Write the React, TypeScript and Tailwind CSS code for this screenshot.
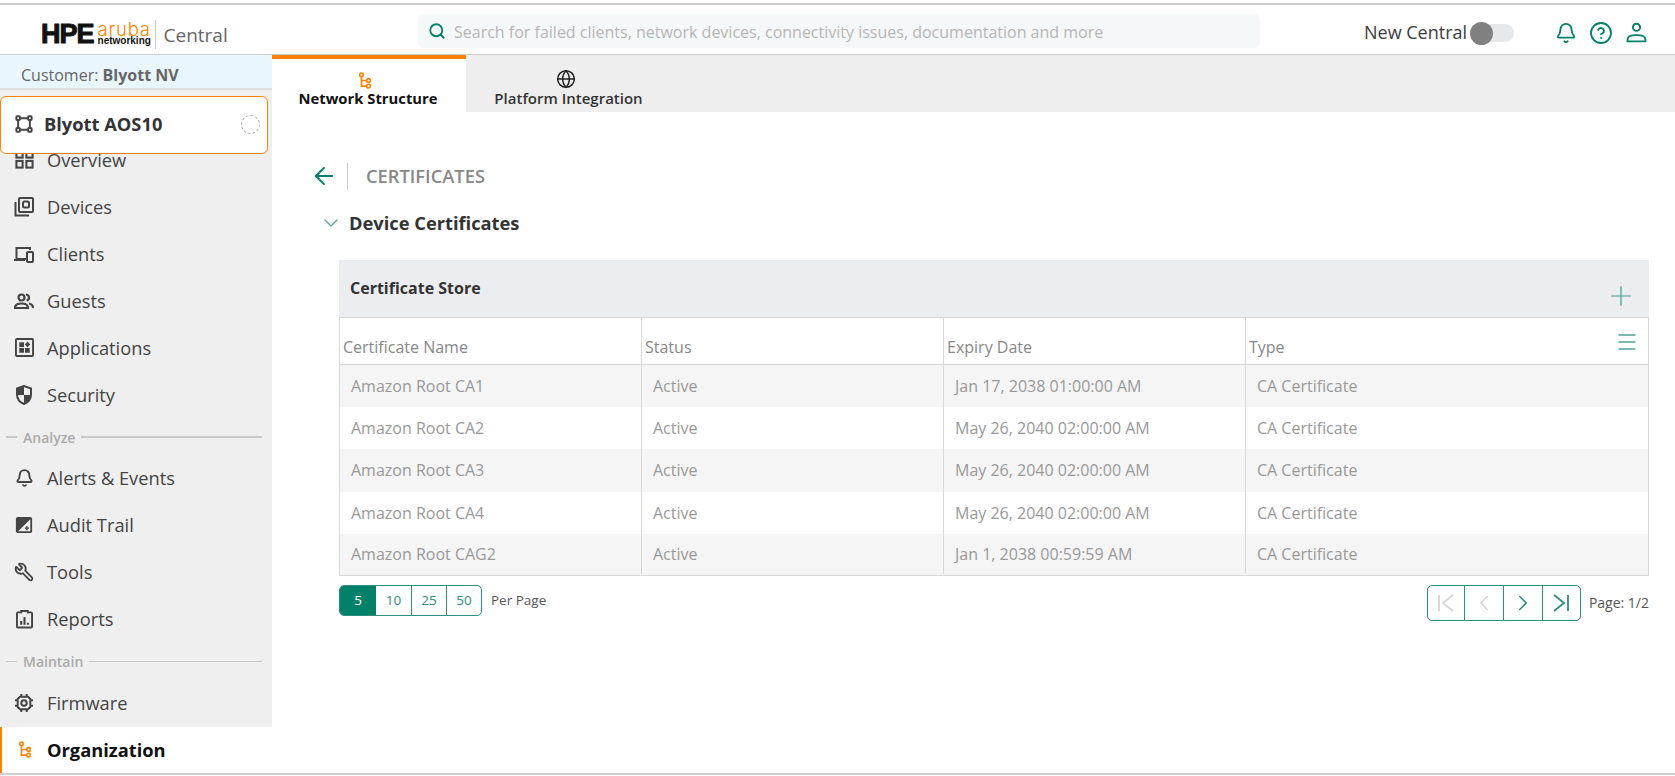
import React from "react";
import { Bell, ArrowLeft, ChevronDown, Plus, Menu, Search, CircleHelp, Globe, Wrench, ChevronLeft, ChevronRight } from "lucide-react";

type IconProps = { className?: string };

const Tree = ({ className }: IconProps) => (
  <svg viewBox="1 0 17 24" fill="none" stroke="currentColor" strokeWidth="2.300" className={className}>
    <circle cx="4.500" cy="4" r="2.600" />
    <circle cx="14.500" cy="12" r="2.600" />
    <circle cx="14.500" cy="20" r="2.600" />
    <path d="M4.500 6.600V20H12M4.500 12H12" />
  </svg>
);
const Nodes = ({ className }: IconProps) => (
  <svg viewBox="0 0 20 20" fill="none" stroke="currentColor" strokeWidth="2.200" className={className}>
    <rect x="1.500" y="1.500" width="4" height="4" rx="1" />
    <rect x="14.500" y="1.500" width="4" height="4" rx="1" />
    <rect x="1.500" y="14.500" width="4" height="4" rx="1" />
    <rect x="14.500" y="14.500" width="4" height="4" rx="1" />
    <path d="M5.500 3.500h9M5.500 16.500h9M3.500 5.500v9M16.500 5.500v9" />
  </svg>
);
const Overview = ({ className }: IconProps) => (
  <svg viewBox="0 0 20 20" fill="none" stroke="currentColor" strokeWidth="2.200" className={className}>
    <rect x="1.500" y="1" width="6.500" height="7" />
    <rect x="12" y="1" width="6.500" height="7" />
    <rect x="1.500" y="11.500" width="6.500" height="7" />
    <rect x="12" y="11.500" width="6.500" height="7" />
  </svg>
);
const Devices = ({ className }: IconProps) => (
  <svg viewBox="0 0 20 20" fill="none" stroke="currentColor" strokeWidth="2" className={className}>
    <rect x="5" y="1" width="14" height="14" rx="1" />
    <rect x="9" y="4.500" width="6" height="6" rx="1.500" />
    <path d="M1.500 5v13.500H15" />
  </svg>
);
const Clients = ({ className }: IconProps) => (
  <svg viewBox="0 0 20 18" fill="none" stroke="currentColor" strokeWidth="2" className={className}>
    <path d="M12 14H2.500V3H16V5" />
    <path d="M0 15h11" />
    <rect x="13" y="7" width="6" height="10" rx="1" />
  </svg>
);
const Guests = ({ className }: IconProps) => (
  <svg viewBox="0 0 20 16" fill="none" stroke="currentColor" strokeWidth="2.200" className={className}>
    <circle cx="7.500" cy="4.500" r="3" />
    <path d="M1 15c0-3 3-4.500 6.500-4.500S14 12 14 15H1Z" />
    <path d="M12 1.500c2 .2 3 1.400 3 3s-1 2.800-2.500 3" />
    <path d="M15 10.500c2.200.5 4 1.800 4 4.500" />
  </svg>
);
const Applications = ({ className }: IconProps) => (
  <svg viewBox="0 0 20 20" className={className}>
    <rect x="1" y="1" width="18" height="18" rx="1" fill="none" stroke="currentColor" strokeWidth="2" />
    <rect x="4.500" y="4.500" width="5" height="5" fill="currentColor" />
    <path d="M13.200 3.800 16 6.800l-2.800 3-2.800-3 2.800-3Z" fill="currentColor" />
    <rect x="4.500" y="10.500" width="5" height="5" fill="currentColor" />
    <rect x="10.500" y="10.500" width="5" height="5" fill="currentColor" />
  </svg>
);
const Shield = ({ className }: IconProps) => (
  <svg viewBox="0 0 18 20" className={className}>
    <path d="M9 1 2 3.500V9c0 5 3 8.500 7 10 4-1.500 7-5 7-10V3.500L9 1Z" fill="none" stroke="currentColor" strokeWidth="2" />
    <path d="M9 1v9H2V3.500L9 1ZM9 10h7c0 4.500-3 7.500-7 9v-9Z" fill="currentColor" />
  </svg>
);
const Audit = ({ className }: IconProps) => (
  <svg viewBox="0 0 20 20" className={className}>
    <rect x="1" y="1" width="18" height="18" rx="2" fill="currentColor" />
    <path d="M17 3.500 3.500 17H17V3.500Z" fill="#efefef" />
    <path d="M11 13.500h4.500M13.200 11.200v4.500" stroke="currentColor" strokeWidth="1.500" />
  </svg>
);
const Reports = ({ className }: IconProps) => (
  <svg viewBox="0 0 18 20" fill="none" stroke="currentColor" strokeWidth="2" className={className}>
    <path d="M5.500 3H2a1 1 0 0 0-1 1v14a1 1 0 0 0 1 1h14a1 1 0 0 0 1-1V4a1 1 0 0 0-1-1h-3.500" />
    <path d="M5.500 4V1.500h7V4" />
    <path d="M5.500 16v-4M9 16V8M12.500 16v-2" strokeWidth="2.200" />
  </svg>
);
const Chip = ({ className }: IconProps) => (
  <svg viewBox="0 0 20 20" fill="none" stroke="currentColor" strokeWidth="2.200" className={className}>
    <path d="M5.500 3h9L17 5.500v9L14.500 17h-9L3 14.500v-9L5.500 3Z" />
    <circle cx="10" cy="10" r="3" />
    <path d="M7 0v3M13 0v3M7 17v3M13 17v3M0 7h3M0 13h3M17 7h3M17 13h3" />
  </svg>
);
const UserIcon = ({ className }: IconProps) => (
  <svg viewBox="0 0 20 20" fill="none" stroke="currentColor" strokeWidth="1.800" className={className}>
    <circle cx="10" cy="5" r="3.400" />
    <path d="M1.500 18.500v-2c0-2.500 3.500-4 8.500-4s8.500 1.500 8.500 4v2h-17Z" />
  </svg>
);
const FirstIcon = ({ className }: IconProps) => (
  <svg viewBox="0 0 20 20" fill="none" stroke="currentColor" strokeWidth="1.800" className={className}>
    <path d="M3 2v16M17 2 7 10l10 8" />
  </svg>
);
const LastIcon = ({ className }: IconProps) => (
  <svg viewBox="0 0 20 20" fill="none" stroke="currentColor" strokeWidth="1.800" className={className}>
    <path d="M17 2v16M3 2l10 8-10 8" />
  </svg>
);

function BellThick({ className }: IconProps) {
  return <Bell className={className} strokeWidth={2.400} />;
}
function WrenchThick({ className }: IconProps) {
  return <Wrench className={className} strokeWidth={2.200} />;
}

const nav1: [string, React.FC<IconProps>, string][] = [
  ["Overview", Overview, "w-[19px] h-[19px]"],
  ["Devices", Devices, "w-[20px] h-[20px]"],
  ["Clients", Clients, "w-[20px] h-[18px]"],
  ["Guests", Guests, "w-[20px] h-[16px]"],
  ["Applications", Applications, "w-[19px] h-[19px]"],
  ["Security", Shield, "w-[18px] h-[20px]"],
];
const nav2: [string, React.FC<IconProps>, string][] = [
  ["Alerts & Events", BellThick, "w-[19px] h-[20px]"],
  ["Audit Trail", Audit, "w-[18px] h-[18px]"],
  ["Tools", WrenchThick, "w-[20px] h-[20px] -scale-x-100"],
  ["Reports", Reports, "w-[17px] h-[20px]"],
];

function NavRow({ label, Icon, size }: { label: string; Icon: React.FC<IconProps>; size: string }) {
  return (
    <div className="flex h-[47px] items-center pb-[2px] text-[18.300px] text-[#444]">
      <div className="flex w-[47px] shrink-0 justify-center pl-[1px]">
        <Icon className={size} />
      </div>
      <span>{label}</span>
    </div>
  );
}

function SectionHead({ label, tall }: { label: string; tall?: boolean }) {
  return (
    <div className={`flex items-center pl-[6px] pr-[10px] ${tall ? "h-[37px]" : "h-[36px]"}`}>
      <div className="h-[1.500px] w-[11px] bg-[#c9c9c9]" />
      <span className="px-[6px] text-[14px] font-semibold text-[#aaaaaa]">{label}</span>
      <div className="h-[1.500px] flex-1 bg-[#c9c9c9]" />
    </div>
  );
}

const rows = [
  ["Amazon Root CA1", "Active", "Jan 17, 2038 01:00:00 AM", "CA Certificate"],
  ["Amazon Root CA2", "Active", "May 26, 2040 02:00:00 AM", "CA Certificate"],
  ["Amazon Root CA3", "Active", "May 26, 2040 02:00:00 AM", "CA Certificate"],
  ["Amazon Root CA4", "Active", "May 26, 2040 02:00:00 AM", "CA Certificate"],
  ["Amazon Root CAG2", "Active", "Jan 1, 2038 00:59:59 AM", "CA Certificate"],
];

const cols = "grid grid-cols-[302px_302px_302px_1fr]";

export default function App() {
  return (
    <div className="flex h-[776px] w-[1675px] flex-col overflow-hidden bg-white font-['Open_Sans',sans-serif]">
      <div className="mt-[3px] h-[2px] shrink-0 bg-[#cccccc]" />
      <header className="flex h-[50px] shrink-0 items-center border-b border-[#cccccc] bg-white pt-[3px]">
        <div className="mt-[6px] flex w-[418px] shrink-0 items-center pl-[41px]">
          <span className="font-['Liberation_Sans',sans-serif] text-[27px] leading-none font-bold tracking-[-1px] text-[#111] [-webkit-text-stroke:1px_#111]">HPE</span>
          <div className="ml-[4px] flex w-[52px] flex-col items-start">
            <span className="font-['Inter',sans-serif] text-[18.500px] leading-[13px] font-light tracking-[0.800px] text-[#ff8300]">aruba</span>
            <span className="font-['Liberation_Sans',sans-serif] text-[10px] leading-[10px] font-bold text-[#111]">networking</span>
          </div>
          <div className="ml-[5px] h-[29px] w-px bg-[#cccccc]" />
          <span className="mt-[3px] ml-[8px] text-[19px] text-[#666]">Central</span>
        </div>
        <div className="flex h-[34px] w-[842px] shrink-0 items-center gap-[8px] rounded-md bg-[#f5f8f8] pl-[10px]">
          <Search className="h-[18px] w-[18px] text-[#01806a]" strokeWidth={2.400} />
          <span className="mt-[1px] text-[16px] text-[#b5b5b5]">Search for failed clients, network devices, connectivity issues, documentation and more</span>
        </div>
        <div className="mt-[3px] ml-[104px] flex items-center">
          <span className="text-[18px] text-[#3c3c3c]">New Central</span>
          <div className="relative ml-[3px] h-[18px] w-[44px] rounded-full bg-[#e6e8ea]">
            <div className="absolute top-[-2px] left-0 h-[23px] w-[23px] rounded-full bg-[#808080]" />
          </div>
        </div>
        <div className="mt-[3px] ml-[41px] flex items-center text-[#01806a]">
          <Bell className="h-[24px] w-[22px]" strokeWidth={2} />
          <CircleHelp className="ml-[12px] h-[24px] w-[24px]" strokeWidth={1.800} />
          <UserIcon className="ml-[13px] h-[21px] w-[21px]" />
        </div>
      </header>

      <div className="flex h-[718px] shrink-0">
        <aside className="flex w-[272px] shrink-0 flex-col bg-[#efefef]">
          <div className="flex h-[35px] shrink-0 items-center border-b-2 border-[#dddddd] bg-[#e9f6fd] pt-[7px] pl-[21px] text-[16px] text-[#666]">
            <span>Customer:&nbsp;</span>
            <span className="font-bold">Blyott NV</span>
          </div>
          <div className="relative z-10 mt-[6px] flex h-[58px] w-[268px] shrink-0 items-center rounded-md border border-[#ff8300] bg-white pb-[2px] pl-[14px]">
            <Nodes className="h-[18px] w-[18px] text-[#444]" />
            <span className="ml-[11px] text-[18.300px] font-bold text-[#333]">Blyott AOS10</span>
            <div className="absolute top-[18px] right-[7px] h-[19px] w-[19px] rounded-full border border-dashed border-[#aaaaaa]" />
          </div>
          <div className="-mt-[17px] flex flex-1 flex-col">
            {nav1.map(([l, I, s]) => <NavRow key={l} label={l} Icon={I} size={s} />)}
            <SectionHead label="Analyze" />
            {nav2.map(([l, I, s]) => <NavRow key={l} label={l} Icon={I} size={s} />)}
            <SectionHead label="Maintain" tall />
            <NavRow label="Firmware" Icon={Chip} size="w-[18px] h-[18px]" />
            <div className="flex h-[47px] items-center border-l-2 border-[#ff8300] bg-white pb-[2px] text-[18.300px] font-bold text-[#111]">
              <div className="flex w-[45px] shrink-0 justify-center">
                <Tree className="h-[17px] w-[12px] text-[#ff8300]" />
              </div>
              <span>Organization</span>
            </div>
          </div>
        </aside>

        <main className="flex min-w-0 flex-1 flex-col">
          <div className="flex h-[57px] shrink-0 bg-[#eeeeee]">
            <div className="flex w-[194px] flex-col items-center border-t-4 border-[#ff8300] bg-white pt-[13px] pr-[2px]">
              <Tree className="mr-[7px] h-[17px] w-[12px] text-[#ff8300]" />
              <span className="-mt-[1px] text-[14.800px] leading-[20px] font-bold text-[#111]">Network Structure</span>
            </div>
            <div className="flex w-[205px] flex-col items-center pt-[14px]">
              <Globe className="mr-[5px] h-[20px] w-[20px] text-[#222]" strokeWidth={1.800} />
              <span className="-mt-[1px] text-[15px] leading-[20px] font-semibold text-[#333]">Platform Integration</span>
            </div>
          </div>

          <div className="flex flex-1 flex-col">
            <div className="mt-[50px] flex h-[28px] items-center pl-[38px]">
              <ArrowLeft className="h-[28px] w-[28px] text-[#01806a]" strokeWidth={1.700} />
              <div className="ml-[9px] h-[27px] w-px bg-[#cccccc]" />
              <span className="ml-[18px] text-[18.300px] font-semibold text-[#888888]">CERTIFICATES</span>
            </div>
            <div className="mt-[18px] flex h-[30px] items-center pl-[47px]">
              <ChevronDown className="h-[24px] w-[24px] text-[#5fa89b]" strokeWidth={1.400} />
              <span className="ml-[6px] text-[18.300px] font-bold text-[#333]">Device Certificates</span>
            </div>

            <div className="mt-[22px] ml-[67px] w-[1310px]">
              <div className="flex h-[57px] items-start justify-between bg-[#ecedf0] pr-[12px] pl-[11px]">
                <span className="mt-[18px] text-[16px] leading-[20px] font-bold text-[#333]">Certificate Store</span>
                <Plus className="mt-[20px] h-[32px] w-[32px] text-[#3f9d8c]" strokeWidth={0.900} />
              </div>
              <div className="border-[1.500px] border-[#d8d8d6]">
                <div className={`${cols} relative h-[47px] border-b-[1.500px] border-[#d8d8d6] text-[16px] text-[#888888]`}>
                  {["Certificate Name", "Status", "Expiry Date", "Type"].map((h, i) => (
                    <div key={h} className={`pt-[18px] pl-[3px] leading-[22px] ${i < 3 ? "border-r-[1.500px] border-[#d8d8d6]" : ""}`}>{h}</div>
                  ))}
                  <Menu className="absolute top-[12px] right-[9px] h-[24px] w-[24px] text-[#4ea595]" strokeWidth={1.400} />
                </div>
                {rows.map((r, i) => (
                  <div key={r[0]} className={`${cols} text-[16px] text-[#999999] ${i === 4 ? "h-[41px] pb-[1px]" : "h-[42.200px]"} ${i % 2 === 0 ? "bg-[#f5f5f5]" : "bg-white"}`}>
                    {r.map((c, j) => (
                      <div key={j} className={`flex items-center pl-[11px] ${j < 3 ? "border-r-[1.500px] border-[#d8d8d6]" : ""}`}>{c}</div>
                    ))}
                  </div>
                ))}
              </div>

              <div className="mt-[9px] flex items-start justify-between">
                <div className="flex items-center">
                  <div className="flex h-[31px] items-stretch overflow-hidden rounded-[5px] border border-[#2c8f7f] text-[13.500px] text-[#2c8f7f]">
                    <div className="flex w-[36px] items-center justify-center bg-[#01806a] text-white">5</div>
                    {["10", "25", "50"].map((n, i) => (
                      <div key={n} className={`flex w-[35px] items-center justify-center ${i > 0 ? "border-l border-[#2c8f7f]" : ""}`}>{n}</div>
                    ))}
                  </div>
                  <span className="ml-[9px] text-[13.500px] text-[#555]">Per Page</span>
                </div>
                <div className="flex items-center">
                  <div className="flex h-[36px] items-stretch rounded-[5px] border border-[#2c8f7f]">
                    <div className="flex w-[36px] items-center justify-center"><FirstIcon className="h-[20px] w-[20px] text-[#d5d5d5]" /></div>
                    <div className="flex w-[39px] items-center justify-center border-l border-[#2c8f7f]"><ChevronLeft className="h-[26px] w-[26px] text-[#d5d5d5]" strokeWidth={1.500} /></div>
                    <div className="flex w-[39px] items-center justify-center border-l border-[#2c8f7f]"><ChevronRight className="h-[26px] w-[26px] text-[#2c8f7f]" strokeWidth={1.500} /></div>
                    <div className="flex w-[38px] items-center justify-center border-l border-[#2c8f7f]"><LastIcon className="h-[20px] w-[20px] text-[#2c8f7f]" /></div>
                  </div>
                  <span className="ml-[8px] text-[14px] text-[#555]">Page: 1/2</span>
                </div>
              </div>
            </div>
          </div>
        </main>
      </div>
      <div className="h-[2px] shrink-0 bg-[#cfcfcf]" />
    </div>
  );
}
